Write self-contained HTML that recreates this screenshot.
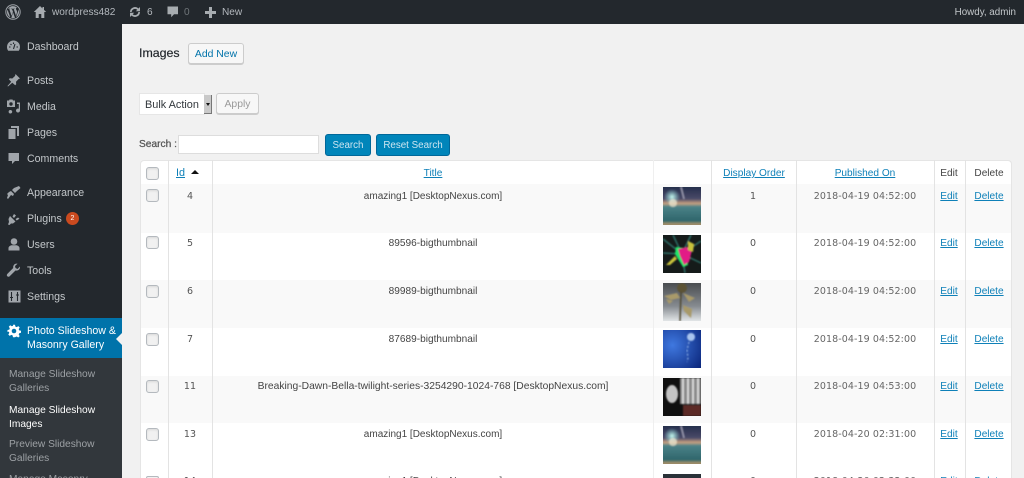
<!DOCTYPE html>
<html><head><meta charset="utf-8"><title>Images</title>
<style>
html,body{margin:0;padding:0;width:1024px;height:478px;overflow:hidden;background:#f1f1f1}
body{position:relative;font-family:"Liberation Sans",sans-serif;font-size:10.1px;color:#555}
#w{position:absolute;left:0;top:0;width:1024px;height:478px;overflow:hidden;filter:blur(.3px)}
.a{position:absolute;white-space:nowrap}
.c{text-align:center;transform:translateX(-50%);line-height:14px}
.d{font-family:"DejaVu Sans",sans-serif;font-size:9.5px;letter-spacing:.08px}
#bar{left:0;top:0;width:1024px;height:24px;background:#23282d}
#side{left:0;top:24px;width:122px;height:454px;background:#23282d}
.m{left:27px;font-size:10.6px;color:#c3c7ca;line-height:14px}
.s{left:9px;font-size:10.2px;line-height:14px;color:#9da1a5}
.i{position:absolute}
.b{color:#b4b9be;font-size:10.1px;line-height:14px}
a{color:#0e80b8;text-decoration:underline}
.row{position:absolute;left:141px;width:870px}
.cb{position:absolute;left:146px;width:11px;height:11px;border:1px solid #b4b9be;border-radius:3px;background:#f1f1f1;box-shadow:inset 0 1px 2px rgba(0,0,0,.1)}
.v{position:absolute;top:160px;width:1px;height:318px;background:#e3e3e3}
.t{position:absolute;left:663px;width:38px;height:38px;overflow:hidden}
.btn{border:1px solid #ccc;border-radius:3px;background:#f7f7f7;box-shadow:0 1px 0 #ccc;box-sizing:border-box}
.blue{background:#0085ba;border:1px solid #006799;border-radius:3px;box-sizing:border-box;color:#cde5f0;text-align:center;font-size:9.8px;line-height:21px}
.n{color:#444}
.e{height:2px;overflow:hidden}
</style></head><body><div id="w">
<div class="a" id="bar"></div>
<div class="a" id="side"></div>

<svg class="i" style="left:5px;top:4px" width="16" height="16" viewBox="0 0 16 16"><circle cx="8" cy="8" r="7.2" fill="none" stroke="#9ea3a8" stroke-width="1"/><path d="M2 8c0 2.3 1.3 4.3 3.300 5.300L2.500 5.600C2.200 6.300 2 7.100 2 8zM12 7.700c0-.7-.3-1.200-.5-1.600-.3-.5-.6-.9-.6-1.400 0-.5.4-1 1-1h.1A6 6 0 0 0 3 4.700h.4c.6 0 1.600-.1 1.600-.1.300 0 .4.500 0 .5 0 0-.3 0-.7.100l2.300 6.700 1.400-4.100-1-2.600c-.3 0-.7-.1-.7-.1-.3 0-.3-.5 0-.5 0 0 1 .1 1.600.1s1.600-.1 1.600-.1c.3 0 .4.500 0 .5 0 0-.3 0-.7.100l2.200 6.700.6-2.100c.3-.8.4-1.500.4-2zM8.100 8.600l-1.800 5.300a6 6 0 0 0 3.700-.1l-1.900-5.200zM13.300 5.100c.1.200.1.400.1.700 0 .6-.1 1.300-.5 2.100l-1.800 5.300a6 6 0 0 0 2.200-8.100z" fill="#9ea3a8"/></svg>
<svg class="i" style="left:33px;top:5px" width="14" height="14" viewBox="0 0 14 14"><path d="M7 1 .8 7h1.900v6h3V9h2.600v4h3V7h1.900L11 4.900V2H9.500v1.500z" fill="#a7acb0"/></svg>
<div class="a b" style="left:52px;top:6px">wordpress482</div>
<svg class="i" style="left:128px;top:5px" width="14" height="14" viewBox="0 0 14 14"><path d="M2 7a5 5 0 0 1 8.500-3.500L12 2v4.300H7.800l1.500-1.500A3.300 3.300 0 0 0 3.700 7zM12 7a5 5 0 0 1-8.500 3.500L2 12V7.700h4.200L4.700 9.200A3.300 3.300 0 0 0 10.300 7z" fill="#a7acb0"/></svg>
<div class="a b" style="left:147px;top:6px">6</div>
<svg class="i" style="left:166px;top:5px" width="13" height="14" viewBox="0 0 13 14"><path d="M1.500 1.500h10.500v7.800H8l-2.800 3v-3H1.500z" fill="#a7acb0"/></svg>
<div class="a b" style="left:184px;top:6px;color:#6f7579">0</div>
<svg class="i" style="left:204px;top:6px" width="13" height="13" viewBox="0 0 13 13"><path d="M5 1h3v4h4v3H8v4H5V8H1V5h4z" fill="#a7acb0"/></svg>
<div class="a b" style="left:222px;top:6px">New</div>
<div class="a b" style="right:8px;top:6px;color:#c3c7ca;font-size:9.8px">Howdy, admin</div>

<svg class="i" style="left:6px;top:39px" width="15" height="14" viewBox="0 0 15 14"><path d="M7.500 1.500a6.500 6.500 0 0 0-6.500 6.500c0 1.400.4 2.600 1.200 3.700h10.600A6.300 6.300 0 0 0 14 8a6.500 6.500 0 0 0-6.500-6.500z" fill="#a0a5aa"/><path d="M7.500 10 9 5M3 8h1.500M10.500 8H12M4.500 5l1 1M7.500 3.500V5" stroke="#23282d" stroke-width="1.100"/></svg>
<div class="a m" style="top:40px">Dashboard</div>
<svg class="i" style="left:6px;top:73px" width="15" height="15" viewBox="0 0 15 15"><path d="M9.500 1 14 5.500l-1.500.6-2.500 2.600.2 2.500-1 1L6.300 9.800 2 13.500 1.500 13l3.700-4.300L2.800 6.300l1-1 2.500.2L9 3z" fill="#a0a5aa"/></svg>
<div class="a m" style="top:74px">Posts</div>
<svg class="i" style="left:6px;top:99px" width="15" height="15" viewBox="0 0 15 15"><path d="M1 1.500h2l.5-1h3l.5 1h2V8H1zM11 3.500h3v8a2 2 0 1 1-1.200-1.800V5H11zM4 11a1.800 1.800 0 1 1 0 3.500A1.800 1.800 0 0 1 4 11z" fill="#a0a5aa"/><circle cx="5" cy="5" r="1.700" fill="#23282d"/></svg>
<div class="a m" style="top:100px">Media</div>
<svg class="i" style="left:7px;top:125px" width="13" height="15" viewBox="0 0 13 15"><path d="M4 1h8v10H10V3H4z" fill="#a0a5aa"/><path d="M1.500 4h7v10h-7z" fill="#a0a5aa"/></svg>
<div class="a m" style="top:126px">Pages</div>
<svg class="i" style="left:7px;top:151px" width="14" height="15" viewBox="0 0 14 15"><path d="M1.500 2h10.500v8H8l-3 3v-3H1.500z" fill="#a0a5aa"/></svg>
<div class="a m" style="top:152px">Comments</div>
<svg class="i" style="left:6px;top:185px" width="15" height="15" viewBox="0 0 15 15"><path d="M14.500 3 13 1 8 3 6 5l3 3 2-2zM5 6 8 9 7 11 5 10 2 14 1 13l1-3-1-1 2-2z" fill="#a0a5aa"/></svg>
<div class="a m" style="top:186px">Appearance</div>
<svg class="i" style="left:6px;top:211px" width="15" height="15" viewBox="0 0 15 15"><path d="M4 5 9.500 10.500 7 12.500H5L3.500 14 2 13.500l1-2.500-.5-3zM8 3l-1.500 2.500L8 7l2-2.500zM12 6.500 9.500 8l1.200 1.500 2.800-1.800z" fill="#a0a5aa"/></svg>
<div class="a m" style="top:212px">Plugins</div>
<div class="a" style="left:66px;top:212px;width:13px;height:13px;border-radius:7px;background:#ca4a1f;color:#fff;font-size:7px;line-height:13px;text-align:center">2</div>
<svg class="i" style="left:7px;top:237px" width="14" height="15" viewBox="0 0 14 15"><circle cx="7" cy="4.500" r="3.300" fill="#a0a5aa"/><path d="M1.500 13.500V11c0-1.500 1.800-2.800 3.500-2.800h4c1.700 0 3.500 1.300 3.500 2.800v2.500z" fill="#a0a5aa"/></svg>
<div class="a m" style="top:238px">Users</div>
<svg class="i" style="left:6px;top:263px" width="15" height="15" viewBox="0 0 15 15"><path d="M14 3.500 11.500 6 9.500 5 9 3l2.500-2.300C9 .2 6.800 2 7.200 5L1.500 10.800c-1 1-.8 1.900-.2 2.500s1.500.8 2.500-.2L9.500 7.500c3 .5 4.800-1.500 4.500-4z" fill="#a0a5aa"/></svg>
<div class="a m" style="top:264px">Tools</div>
<svg class="i" style="left:8px;top:290px" width="13" height="13" viewBox="0 0 13 13"><path d="M.5.500h12v12H.5z" fill="#a0a5aa"/><path d="M3.500 2v9M9.500 2v9M2 7.500h3M8 5h3" stroke="#23282d" stroke-width="1.100"/></svg>
<div class="a m" style="top:290px">Settings</div>

<div class="a" style="left:0;top:318px;width:122px;height:40px;background:#0073aa"></div>
<div class="a" style="left:116px;top:332px;width:0;height:0;border:7px solid transparent;border-right-color:#f1f1f1;border-left:0"></div>
<svg class="i" style="left:7px;top:324px" width="14" height="14" viewBox="0 0 14 14"><path d="M6 .8h2l.4 1.800 1.300.5 1.600-1 1.400 1.400-1 1.600.5 1.300 1.800.4v2l-1.800.4-.5 1.300 1 1.600-1.400 1.400-1.600-1-1.300.5L8 13.200H6l-.4-1.800-1.300-.5-1.600 1-1.400-1.400 1-1.600-.5-1.300L.5 8V6l1.800-.4.5-1.300-1-1.600 1.400-1.400 1.600 1 1.300-.5z" fill="#fff"/><circle cx="7" cy="7" r="2.300" fill="#0073aa"/></svg>
<div class="a m" style="top:324px;color:#fff">Photo Slideshow &amp;<br>Masonry Gallery</div>
<div class="a" style="left:0;top:358px;width:122px;height:120px;background:#32373c"></div>
<div class="a s" style="top:368px">Manage Slideshow<br>Galleries</div>
<div class="a s" style="top:404px;color:#fff">Manage Slideshow<br>Images</div>
<div class="a s" style="top:438px">Preview Slideshow<br>Galleries</div>
<div class="a s" style="top:473px;height:5px;overflow:hidden">Manage Masonry</div>

<div class="a" style="left:139px;top:45px;font-size:12.4px;line-height:16px;color:#23282d;-webkit-text-stroke:.2px #23282d">Images</div>
<div class="a btn" style="left:188px;top:43px;width:56px;height:21px;color:#0073aa;text-align:center;line-height:21px;font-size:10.4px">Add New</div>

<div class="a" style="left:140px;top:94px;width:64px;height:20px;background:#fff;box-shadow:0 0 0 1px #e6e6e6"></div>
<div class="a" style="left:145px;top:98px;font-size:10.9px;line-height:14px;color:#32373c">Bulk Action</div>
<div class="a" style="left:204px;top:95px;width:8px;height:19px;background:#c9c9c9;border-right:1px solid #777;border-bottom:1px solid #777;box-sizing:border-box"></div>
<div class="a" style="left:206px;top:103px;width:0;height:0;border:2px solid transparent;border-top:3px solid #111;border-bottom:0"></div>
<div class="a btn" style="left:216px;top:93px;width:43px;height:21px;color:#9a9a9a;text-align:center;line-height:22px;font-size:10.4px">Apply</div>

<div class="a" style="left:139px;top:138px;font-size:10.2px;line-height:14px;color:#555;-webkit-text-stroke:.25px #555">Search :</div>
<div class="a" style="left:178px;top:135px;width:141px;height:19px;background:#fff;border:1px solid #ddd;box-sizing:border-box"></div>
<div class="a blue" style="left:325px;top:134px;width:46px;height:22px">Search</div>
<div class="a blue" style="left:376px;top:134px;width:74px;height:22px">Reset Search</div>

<div class="a" style="left:140px;top:160px;width:872px;height:318px;background:#fff;border:1px solid #e5e5e5;border-bottom:0;border-radius:4px 4px 0 0;box-sizing:border-box"></div>
<div class="row" style="top:184px;height:49px;background:#f9f9f9"></div>
<div class="row" style="top:280px;height:48px;background:#f9f9f9"></div>
<div class="row" style="top:376px;height:47px;background:#f9f9f9"></div>
<div class="v" style="left:168px"></div><div class="v" style="left:212px"></div><div class="v" style="left:653px;background:#efefef"></div><div class="v" style="left:711px"></div><div class="v" style="left:796px"></div><div class="v" style="left:934px"></div><div class="v" style="left:965px"></div>

<div class="cb" style="top:167px"></div>
<a class="a" style="left:176px;top:166px;line-height:14px;font-size:10.8px">Id</a>
<div class="a" style="left:191px;top:170px;width:0;height:0;border:4px solid transparent;border-bottom:4px solid #111;border-top:0"></div>
<a class="a c" style="left:433px;top:167px">Title</a>
<a class="a c" style="left:754px;top:167px">Display Order</a>
<a class="a c" style="left:865px;top:167px">Published On</a>
<div class="a c n" style="left:949px;top:167px">Edit</div>
<div class="a c n" style="left:989px;top:167px">Delete</div>

<div class="cb" style="top:189px"></div>
<div class="a c d" style="left:190px;top:190px">4</div>
<div class="a c n" style="left:433px;top:190px;font-size:10px">amazing1 [DesktopNexus.com]</div>
<div class="a c d" style="left:753px;top:190px">1</div>
<div class="a c d" style="left:865px;top:190px;color:#666">2018-04-19 04:52:00</div>
<a class="a c" style="left:949px;top:190px">Edit</a><a class="a c" style="left:989px;top:190px">Delete</a>

<div class="cb" style="top:236px"></div>
<div class="a c d" style="left:190px;top:237px">5</div>
<div class="a c n" style="left:433px;top:237px">89596-bigthumbnail</div>
<div class="a c d" style="left:753px;top:237px">0</div>
<div class="a c d" style="left:865px;top:237px;color:#666">2018-04-19 04:52:00</div>
<a class="a c" style="left:949px;top:237px">Edit</a><a class="a c" style="left:989px;top:237px">Delete</a>

<div class="cb" style="top:285px"></div>
<div class="a c d" style="left:190px;top:285px">6</div>
<div class="a c n" style="left:433px;top:285px">89989-bigthumbnail</div>
<div class="a c d" style="left:753px;top:285px">0</div>
<div class="a c d" style="left:865px;top:285px;color:#666">2018-04-19 04:52:00</div>
<a class="a c" style="left:949px;top:285px">Edit</a><a class="a c" style="left:989px;top:285px">Delete</a>

<div class="cb" style="top:333px"></div>
<div class="a c d" style="left:190px;top:333px">7</div>
<div class="a c n" style="left:433px;top:333px">87689-bigthumbnail</div>
<div class="a c d" style="left:753px;top:333px">0</div>
<div class="a c d" style="left:865px;top:333px;color:#666">2018-04-19 04:52:00</div>
<a class="a c" style="left:949px;top:333px">Edit</a><a class="a c" style="left:989px;top:333px">Delete</a>

<div class="cb" style="top:380px"></div>
<div class="a c d" style="left:190px;top:380px">11</div>
<div class="a c n" style="left:433px;top:380px;font-size:10.3px">Breaking-Dawn-Bella-twilight-series-3254290-1024-768 [DesktopNexus.com]</div>
<div class="a c d" style="left:753px;top:380px">0</div>
<div class="a c d" style="left:865px;top:380px;color:#666">2018-04-19 04:53:00</div>
<a class="a c" style="left:949px;top:380px">Edit</a><a class="a c" style="left:989px;top:380px">Delete</a>

<div class="cb" style="top:428px"></div>
<div class="a c d" style="left:190px;top:428px">13</div>
<div class="a c n" style="left:433px;top:428px;font-size:10px">amazing1 [DesktopNexus.com]</div>
<div class="a c d" style="left:753px;top:428px">0</div>
<div class="a c d" style="left:865px;top:428px;color:#666">2018-04-20 02:31:00</div>
<a class="a c" style="left:949px;top:428px">Edit</a><a class="a c" style="left:989px;top:428px">Delete</a>

<div class="a" style="left:146px;top:476px;width:13px;height:2px;box-sizing:border-box;border:1px solid #b4b9be;border-bottom:0;border-radius:3px 3px 0 0;background:#f1f1f1"></div>
<div class="a c d e" style="left:190px;top:475px;height:3px">14</div>
<div class="a c n e" style="left:433px;top:475px;height:3px;font-size:10px">amazing1 [DesktopNexus.com]</div>
<div class="a c d e" style="left:753px;top:475px;height:3px">0</div>
<div class="a c d e" style="left:865px;top:475px;height:3px;color:#666">2018-04-20 02:32:00</div>
<a class="a c e" style="left:949px;top:475px;height:3px">Edit</a><a class="a c e" style="left:989px;top:475px;height:3px">Delete</a>

<svg width="0" height="0" style="position:absolute;left:0;top:0"><defs><linearGradient id="g1" x1="0" y1="0" x2="0" y2="1"><stop offset="0" stop-color="#1e2a48"/><stop offset=".33" stop-color="#4a4a68"/><stop offset=".44" stop-color="#c8a080"/><stop offset=".52" stop-color="#4a8288"/><stop offset=".85" stop-color="#2f666c"/><stop offset=".93" stop-color="#a8926a"/><stop offset="1" stop-color="#7c7050"/></linearGradient><radialGradient id="g2"><stop offset="0" stop-color="#c8fbf0"/><stop offset="1" stop-color="#8fe0e0" stop-opacity="0"/></radialGradient><filter id="bl" x="-10%" y="-10%" width="120%" height="120%"><feGaussianBlur stdDeviation=".7"/></filter><linearGradient id="g3" x1="0" y1="0" x2="0" y2="1"><stop offset="0" stop-color="#44474a"/><stop offset=".6" stop-color="#868b90"/><stop offset="1" stop-color="#eef1f3"/></linearGradient><radialGradient id="g4" cx=".25" cy=".4" r=".9"><stop offset="0" stop-color="#3f78e0"/><stop offset="1" stop-color="#0d2a80"/></radialGradient></defs></svg>
<svg class="t" style="top:187px" viewBox="0 0 38 38"><g filter="url(#bl)"><rect x="-2" y="-2" width="42" height="42" fill="url(#g1)"/><circle cx="9" cy="10" r="8" fill="url(#g2)"/><circle cx="10" cy="16" r="4" fill="#fff3d8" opacity=".6"/><path d="M18 0l3 12" stroke="#9a9ab0" stroke-width="1.500"/></g></svg>
<svg class="t" style="top:235px" viewBox="0 0 38 38"><rect width="38" height="38" fill="#151b1a"/><g filter="url(#bl)"><path d="M19 19 0 4M19 19 10 0M19 19 28 0M19 19 38 6M19 19 38 28M19 19 0 18M19 19 22 38" stroke="#2c6a64" stroke-width="1.500"/><path d="M13 12l8 1 2 8 2 9-5 2-8-13z" fill="#1ee86b"/><path d="M15 14l10-2 4 3-3 12-5 3-4-9z" fill="#e21e86"/><path d="M25 6l6 3-1 8-5-2zM3 30l9-9 2 3-7 6z" fill="#c8c23a"/></g></svg>
<svg class="t" style="top:283px" viewBox="0 0 38 38"><rect x="-2" y="-2" width="42" height="42" fill="url(#g3)"/><g filter="url(#bl)"><circle cx="19" cy="5" r="5" fill="#5c5236"/><path d="M1 13l13-3 3 5-9 2zM20 10l12 5-6 4zM20 22l9 4-1 9-7-7zM3 16l7 2-4 3z" fill="#a89a6a"/><path d="M18 9l-1 29" stroke="#4f4830" stroke-width="1.500"/></g></svg>
<svg class="t" style="top:330px" viewBox="0 0 38 38"><rect width="38" height="38" fill="url(#g4)"/><g filter="url(#bl)"><circle cx="28" cy="7" r="4" fill="#a8c4ee"/><path d="M26 12l-2 8 1 8-1 4" stroke="#8fb0e6" stroke-width="1.200" fill="none" stroke-dasharray="2 2"/></g></svg>
<svg class="t" style="top:378px" viewBox="0 0 38 38"><rect width="38" height="38" fill="#101010"/><g filter="url(#bl)"><ellipse cx="9" cy="16" rx="6" ry="9" fill="#c4c4c4"/><path d="M17 0h21v26H17z" fill="#8a8a8a"/><path d="M20 0v26M25 0v26M30 0v26M35 0v26" stroke="#ececec" stroke-width="1.500"/><path d="M20 27h18v11H20z" fill="#5c2a28"/></g></svg>
<svg class="t" style="top:426px" viewBox="0 0 38 38"><g filter="url(#bl)"><rect x="-2" y="-2" width="42" height="42" fill="url(#g1)"/><circle cx="9" cy="10" r="8" fill="url(#g2)"/><circle cx="10" cy="16" r="4" fill="#fff3d8" opacity=".6"/><path d="M18 0l3 12" stroke="#9a9ab0" stroke-width="1.500"/></g></svg>
<div class="a" style="left:663px;top:474px;width:38px;height:4px;background:#2a3138"></div>
</div></body></html>
